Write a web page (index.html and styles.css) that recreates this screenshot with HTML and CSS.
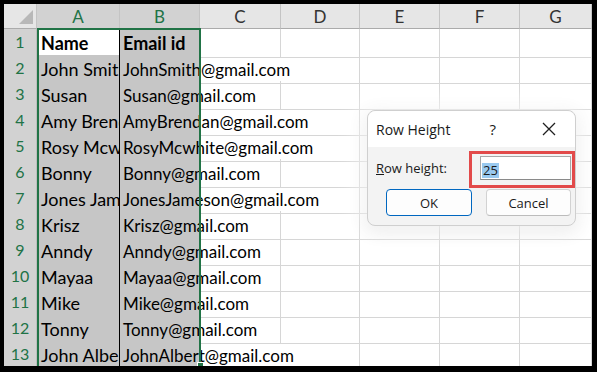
FILE: index.html
```html
<!DOCTYPE html>
<html lang="en">
<head>
    <meta charset="UTF-8">
    <title>Row Height</title>
    <link rel="stylesheet" href="styles.css">
</head>
<body>
    <div class="sheet">
        <div class="row head">
            <div class="corner"><svg width="14" height="14" viewBox="0 0 14 14"><polygon points="14,0 14,14 0,14" fill="#b8b8b8"/></svg></div>
            <div class="sel">A</div><div class="sel">B</div><div>C</div><div>D</div><div>E</div><div>F</div><div>G</div>
        </div>

        <div class="row">
            <div class="num">1</div>
            <div class="name active"><b>Name</b></div>
            <div class="mail"><b class="big">Email id</b></div>
            <div></div><div></div><div></div><div></div><div></div>
        </div>
        <div class="row">
            <div class="num">2</div>
            <div class="name">John Smith</div>
            <div class="mail">JohnSmith@gmail.com</div>
            <div class="wide"></div><div></div><div></div><div></div>
        </div>
        <div class="row">
            <div class="num">3</div>
            <div class="name">Susan</div>
            <div class="mail">Susan@gmail.com</div>
            <div></div><div></div><div></div><div></div><div></div>
        </div>
        <div class="row">
            <div class="num">4</div>
            <div class="name">Amy Brendan</div>
            <div class="mail">AmyBrendan@gmail.com</div>
            <div class="wide"></div><div></div><div></div><div></div>
        </div>
        <div class="row">
            <div class="num">5</div>
            <div class="name">Rosy Mcwhite</div>
            <div class="mail">RosyMcwhite@gmail.com</div>
            <div class="wide"></div><div></div><div></div><div></div>
        </div>
        <div class="row">
            <div class="num">6</div>
            <div class="name">Bonny</div>
            <div class="mail">Bonny@gmail.com</div>
            <div></div><div></div><div></div><div></div><div></div>
        </div>
        <div class="row">
            <div class="num">7</div>
            <div class="name">Jones Jameson</div>
            <div class="mail">JonesJameson@gmail.com</div>
            <div class="wide"></div><div></div><div></div><div></div>
        </div>
        <div class="row">
            <div class="num">8</div>
            <div class="name">Krisz</div>
            <div class="mail">Krisz@gmail.com</div>
            <div></div><div></div><div></div><div></div><div></div>
        </div>
        <div class="row">
            <div class="num">9</div>
            <div class="name">Anndy</div>
            <div class="mail">Anndy@gmail.com</div>
            <div></div><div></div><div></div><div></div><div></div>
        </div>
        <div class="row">
            <div class="num">10</div>
            <div class="name">Mayaa</div>
            <div class="mail">Mayaa@gmail.com</div>
            <div></div><div></div><div></div><div></div><div></div>
        </div>
        <div class="row">
            <div class="num">11</div>
            <div class="name">Mike</div>
            <div class="mail">Mike@gmail.com</div>
            <div></div><div></div><div></div><div></div><div></div>
        </div>
        <div class="row">
            <div class="num">12</div>
            <div class="name">Tonny</div>
            <div class="mail">Tonny@gmail.com</div>
            <div></div><div></div><div></div><div></div><div></div>
        </div>
        <div class="row">
            <div class="num">13</div>
            <div class="name">John Albert</div>
            <div class="mail">JohnAlbert@gmail.com</div>
            <div class="wide"></div><div></div><div></div><div></div>
        </div>

        <!-- selected range A1:B13 -->
        <div class="selection"><span class="handle"></span></div>

        <div class="dialog">
            <div class="dlg-title">
                <span>Row Height</span>
                <span class="help">?</span>
                <svg width="14" height="14" viewBox="0 0 14 14"><path d="M1 1 L13 13 M13 1 L1 13" stroke="#1f1f1f" stroke-width="1.3" fill="none"/></svg>
            </div>
            <div class="dlg-body">
                <div class="field">
                    <label><u>R</u>ow height:</label>
                    <div class="input"><span class="picked">25</span></div>
                </div>
                <div class="buttons">
                    <button class="ok">OK</button>
                    <button>Cancel</button>
                </div>
            </div>
            <div class="mark"></div>
        </div>
    </div>
</body>
</html>
```

FILE: styles.css
```css
* {
    box-sizing: border-box;
}

body {
    margin: 0;
    background: #000;
    font-family: Lato, "Liberation Sans", sans-serif;
}

.sheet {
    position: relative;
    width: 588px;
    height: 362px;
    margin: 4px 0 0 4px;
    overflow: hidden;
    background: #fff;
}

.row {
    display: grid;
    grid-template-columns: 33px 83px 80px 81px 79px 80px 80px 72px;
    height: 26px;
}

.row > div {
    border-right: 1px solid #d6d6d6;
    border-bottom: 1px solid #d6d6d6;
    white-space: nowrap;
}

.row .wide {
    grid-column: span 2;
}

/* column letters */
.row.head {
    height: 25px;
    background: #e6e6e6;
}

.head > div {
    display: flex;
    align-items: center;
    justify-content: center;
    border-color: #c4c4c4;
    border-bottom-color: #ababab;
    font-size: 17px;
    color: #333;
}

.head .corner {
    align-items: flex-end;
    justify-content: flex-end;
    padding: 0 3px 4px 0;
}

.head .sel {
    background: #d2d2d2;
    color: #217346;
}

/* row numbers */
.row .num {
    background: #d2d2d2;
    border-color: #bdbdbd;
    color: #217346;
    font-size: 16px;
    line-height: 26px;
    text-align: center;
}

.row .name,
.row .mail {
    background: #c6c6c6;
    border-color: #000;
    color: #000;
}

.row .name {
    overflow: hidden;
    padding: 1px 0 0 4px;
    font-size: 18px;
    line-height: 26px;
}

.row .mail {
    padding: 1px 0 0 3px;
    font-size: 17px;
    line-height: 27px;
}

.row .name.active {
    background: #fff;
}

.mail .big {
    font-size: 18px;
}

.selection {
    position: absolute;
    left: 33px;
    top: 24px;
    width: 164px;
    height: 345px;
    border: 2px solid #217346;
}

.handle {
    position: absolute;
    right: -5px;
    bottom: 2px;
    width: 7px;
    height: 7px;
    background: #217346;
    border: 1px solid #fff;
}

/* Row Height dialog */
.dialog {
    position: absolute;
    left: 363px;
    top: 106px;
    width: 209px;
    height: 116px;
    border: 1px solid #cfcfcf;
    border-radius: 8px;
    background: #f3f3f3;
    box-shadow: 0 0 24px 8px rgba(255, 255, 255, 0.75), 0 4px 18px rgba(0, 0, 0, 0.16);
    font-family: "Open Sans", "Noto Sans", sans-serif;
    color: #1a1a1a;
}

.dlg-title {
    display: flex;
    align-items: center;
    height: 36px;
    padding: 0 19px 0 8px;
    background: #fff;
    border-radius: 8px 8px 0 0;
    font-size: 14px;
}

.dlg-title .help {
    margin-left: auto;
    margin-right: 46px;
    font-size: 15px;
}

.dlg-body {
    padding: 9px 4px 0 8px;
}

.field {
    display: flex;
    align-items: center;
    height: 24px;
    font-size: 13px;
}

.input {
    width: 91px;
    height: 24px;
    margin-left: auto;
    padding: 6px 0 0 1px;
    background: #fff;
    border: 1px solid #a8a8a8;
    border-bottom-color: #8a8a8a;
    font-size: 13px;
    line-height: 15px;
}

.picked {
    display: inline-block;
    background: #99c9ef;
    padding: 0 1px;
}

.buttons {
    display: flex;
    gap: 14px;
    margin-top: 9px;
    padding-left: 10px;
}

.buttons button {
    width: 85px;
    height: 27px;
    background: #fdfdfd;
    border: 1px solid #d2d2d2;
    border-bottom-color: #bcbcbc;
    border-radius: 4px;
    font-family: "Open Sans", "Noto Sans", sans-serif;
    font-size: 13px;
    color: #1a1a1a;
}

.buttons .ok {
    width: 86px;
    border: 1px solid #0067c0;
}

.mark {
    position: absolute;
    left: 101px;
    top: 40px;
    width: 106px;
    height: 37px;
    border: 3px solid #e24a4a;
}
```
